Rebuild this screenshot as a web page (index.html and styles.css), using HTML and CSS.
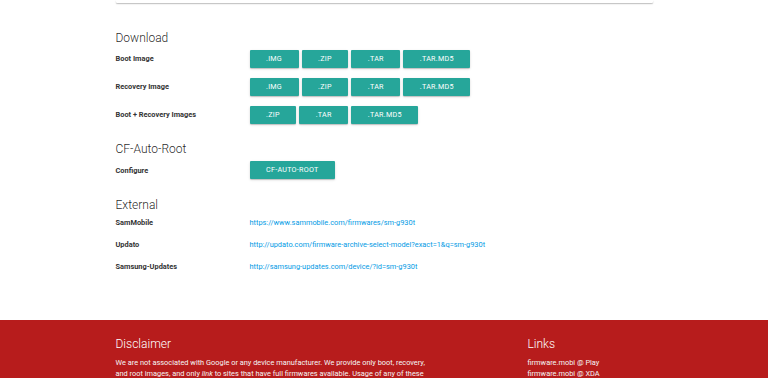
FILE: index.html
```html
<!DOCTYPE html>
<html lang="en">

<head>
    <meta charset="UTF-8">
    <meta name="viewport" content="width=device-width, initial-scale=1.0">
    <title>SM-G930T firmware</title>
    <link rel="stylesheet" href="styles.css">
</head>

<body>
    <div class="container">
        <!-- device card (only the bottom edge is visible) -->
        <div class="card"></div>

        <!-- download -->
        <div class="section section-first">
            <h5 class="title">Download</h5>
            <div class="row">
                <div class="label">Boot Image</div>
                <div class="btns">
                    <a class="btn" href="#">.IMG</a>
                    <a class="btn" href="#">.ZIP</a>
                    <a class="btn" href="#">.TAR</a>
                    <a class="btn" href="#">.TAR.MD5</a>
                </div>
            </div>
            <div class="row">
                <div class="label">Recovery Image</div>
                <div class="btns">
                    <a class="btn" href="#">.IMG</a>
                    <a class="btn" href="#">.ZIP</a>
                    <a class="btn" href="#">.TAR</a>
                    <a class="btn" href="#">.TAR.MD5</a>
                </div>
            </div>
            <div class="row">
                <div class="label">Boot + Recovery Images</div>
                <div class="btns">
                    <a class="btn" href="#">.ZIP</a>
                    <a class="btn" href="#">.TAR</a>
                    <a class="btn" href="#">.TAR.MD5</a>
                </div>
            </div>
        </div>

        <!-- cf-auto-root -->
        <div class="section">
            <h5 class="title">CF-Auto-Root</h5>
            <div class="row">
                <div class="label">Configure</div>
                <div class="btns">
                    <a class="btn" href="#">CF-Auto-Root</a>
                </div>
            </div>
        </div>

        <!-- external -->
        <div class="section">
            <h5 class="title">External</h5>
            <div class="row row-link">
                <div class="label">SamMobile</div>
                <div><a class="ext" href="#">https://www.sammobile.com/firmwares/sm-g930t</a></div>
            </div>
            <div class="row row-link">
                <div class="label">Updato</div>
                <div><a class="ext" href="#">http://updato.com/firmware-archive-select-model?exact=1&amp;q=sm-g930t</a></div>
            </div>
            <div class="row row-link">
                <div class="label">Samsung-Updates</div>
                <div><a class="ext" href="#">http://samsung-updates.com/device/?id=sm-g930t</a></div>
            </div>
        </div>
    </div>

    <footer class="page-footer">
        <div class="container footer-row">
            <div class="disclaimer">
                <h5 class="title">Disclaimer</h5>
                <p>We are not associated with Google or any device manufacturer. We provide only boot, recovery,
                    and root images, and only <i>link</i> to sites that have full firmwares available. Usage of any of these
                    files is entirely at your own risk.</p>
            </div>
            <div class="links">
                <h5 class="title">Links</h5>
                <ul>
                    <li><a href="#">firmware.mobi @ Play</a></li>
                    <li><a href="#">firmware.mobi @ XDA</a></li>
                </ul>
            </div>
        </div>
    </footer>
</body>

</html>
```

FILE: styles.css
```css
* {
    margin: 0;
    padding: 0;
    box-sizing: border-box;
}

body {
    font-family: Roboto, 'Liberation Sans', sans-serif;
    font-size: 7.4px;
    color: rgba(0, 0, 0, 0.87);
    background-color: #fff;
}

.container {
    width: 537px;
    margin: 0 auto;
}

.card {
    height: 3px;
    background-color: #fff;
    border-radius: 0 0 1px 1px;
    box-shadow: 0 1px 1px 0 rgba(0, 0, 0, 0.14), 0 1px 2px 0 rgba(0, 0, 0, 0.12), 0 1px 1px -1px rgba(0, 0, 0, 0.2);
}

.title {
    font-size: 12px;
    line-height: 13px;
    font-weight: 300;
}

.section {
    padding-top: 14.7px;
}

.section-first {
    padding-top: 28.7px;
}

.row {
    display: grid;
    grid-template-columns: 134px 1fr;
    align-items: center;
    height: 28px;
}

.row-link {
    height: 21.7px;
}

.label {
    font-weight: 700;
    color: #333;
}

.btns {
    display: flex;
    gap: 3px;
}

.btn {
    display: inline-block;
    height: 18px;
    line-height: 18px;
    padding: 0 16.5px;
    background-color: #26a69a;
    color: #fff;
    font-size: 7.2px;
    letter-spacing: 0.25px;
    text-transform: uppercase;
    text-decoration: none;
    border-radius: 1px;
    box-shadow: 0 1px 1px 0 rgba(0, 0, 0, 0.14), 0 1px 3px 0 rgba(0, 0, 0, 0.12), 0 1px 1px -1px rgba(0, 0, 0, 0.2);
}

.ext {
    color: #039be5;
    text-decoration: none;
}

.page-footer {
    margin-top: 42.8px;
    background-color: #b71c1c;
    color: #fff;
    padding-top: 18px;
    height: 80px;
}

.footer-row {
    display: grid;
    grid-template-columns: 412px 1fr;
}

.disclaimer p {
    width: 315px;
    margin-top: 6.5px;
    line-height: 11px;
    color: #f5f5f5;
}

.links ul {
    list-style: none;
    margin-top: 6.5px;
    line-height: 11px;
}

.links a {
    color: #f5f5f5;
    text-decoration: none;
}
```
